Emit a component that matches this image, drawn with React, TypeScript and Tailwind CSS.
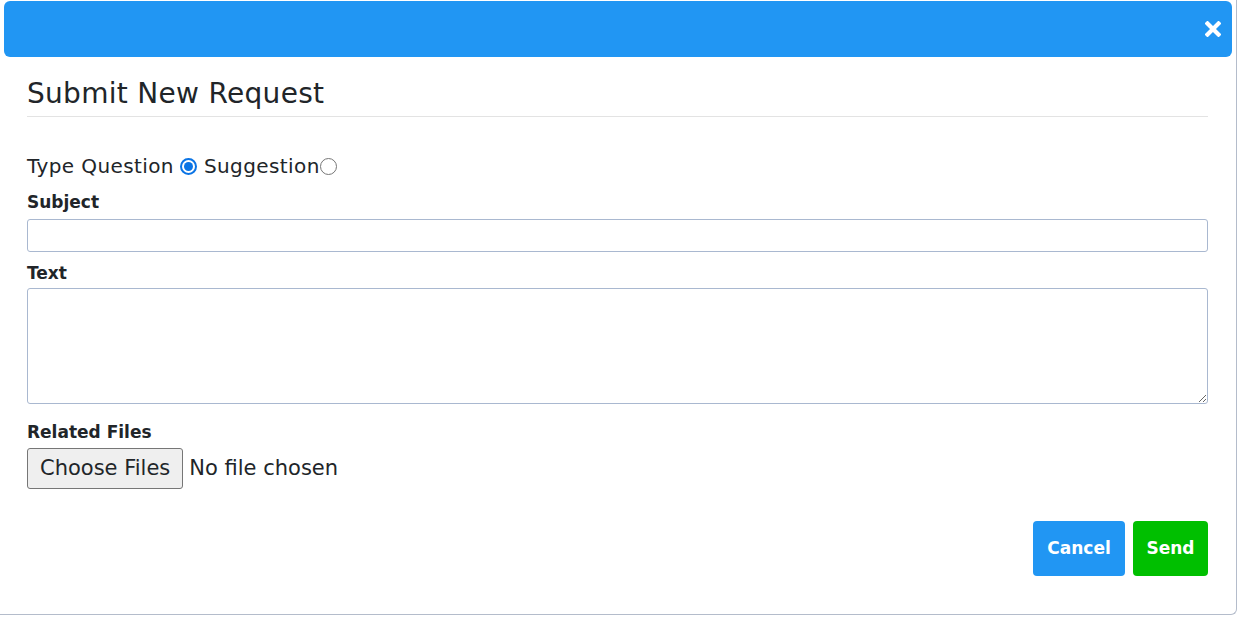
import React from 'react';

const font = { fontFamily: '"DejaVu Sans", Verdana, sans-serif' };

const Radio = ({ checked }: { checked?: boolean }) =>
    checked ? (
        <span className="inline-flex w-[17px] h-[17px] rounded-full border-2 border-[#0b74e5] items-center justify-center bg-white align-middle">
            <span className="w-[9px] h-[9px] rounded-full bg-[#0b74e5]" />
        </span>
    ) : (
        <span className="inline-block w-[17px] h-[17px] rounded-full border border-[#767676] bg-white align-middle" />
    );

export default function App() {
    return (
        <div className="w-[1238px] h-[617px] bg-white text-[#212529] overflow-hidden" style={font}>
            <div className="h-[615px] w-[1237px] border-r border-b border-[#b4bccb] rounded-br-md pt-[1px] flex flex-col">
                {/* Header */}
                <div className="mx-[4px] h-[56px] bg-[#2196f3] rounded-md flex items-center justify-end pr-[11px]">
                    <svg width="16" height="16" viewBox="0 0 16 16">
                        <path d="M2.5 2.5 L13.5 13.5 M13.5 2.5 L2.5 13.5" stroke="#ffffff" strokeWidth="4.2" strokeLinecap="square" />
                    </svg>
                </div>

                <div className="px-[27px] pr-[28px] flex flex-col">
                    <h2 className="text-[28px] leading-[34px] tracking-[0.3px] mt-[20px] pb-[5px] border-b border-[#e3e3e3] font-normal">
                        Submit New Request
                    </h2>

                    <div className="mt-[37px] text-[20px] leading-[24px] tracking-[0.4px] flex items-center">
                        <span>Type Question</span>
                        <span className="ml-[6px] flex"><Radio checked /></span>
                        <span className="ml-[7px]">Suggestion</span>
                        <Radio />
                    </div>

                    <label className="mt-[14px] text-[17px] leading-[20px] font-bold">Subject</label>
                    <input className="mt-[7px] h-[33px] border border-[#a9b8d0] rounded-[3px] outline-none px-2" />

                    <label className="mt-[11px] text-[17px] leading-[20px] font-bold">Text</label>
                    <textarea className="mt-[5px] h-[116px] border border-[#a9b8d0] rounded-[3px] outline-none p-2 resize-y" />

                    <label className="mt-[18px] text-[17px] leading-[20px] font-bold">Related Files</label>
                    <div className="mt-[6px] flex items-center text-[21px]">
                        <button className="h-[41px] px-[12px] bg-[#efefef] border border-[#767676] rounded-[3px] text-[21px]">
                            Choose Files
                        </button>
                        <span className="ml-[6px]">No file chosen</span>
                    </div>

                    <div className="mt-[32px] flex justify-end gap-[8px]">
                        <button className="h-[55px] w-[92px] bg-[#2196f3] text-white font-bold text-[17px] rounded-[4px]">
                            Cancel
                        </button>
                        <button className="h-[55px] w-[75px] bg-[#00bf00] text-white font-bold text-[17px] rounded-[4px]">
                            Send
                        </button>
                    </div>
                </div>
            </div>
        </div>
    );
}
